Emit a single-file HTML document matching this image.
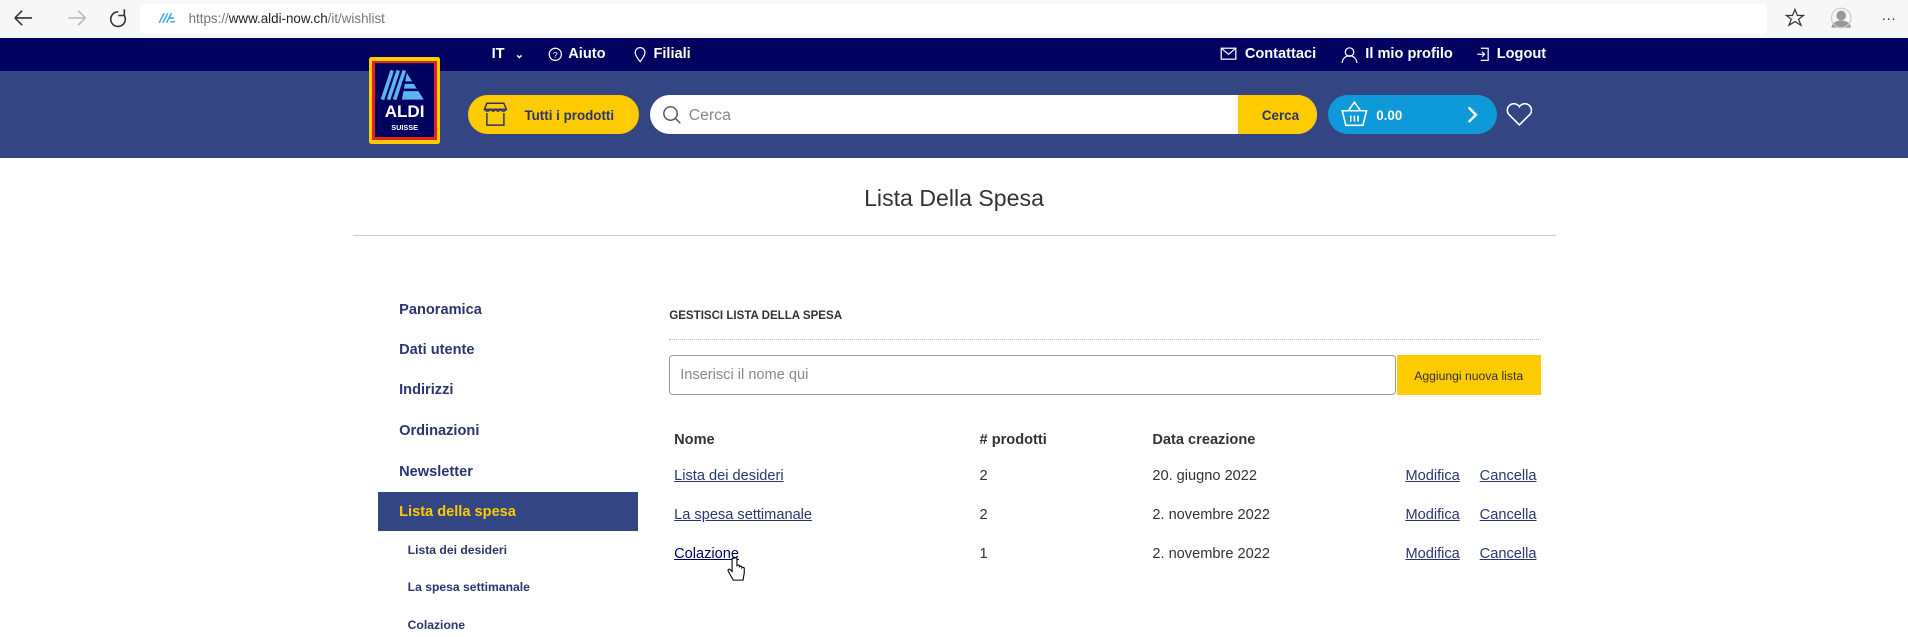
<!DOCTYPE html>
<html><head><meta charset="utf-8">
<style>
html,body{margin:0;padding:0;}
body{width:1568px;height:523px;zoom:1.21684;overflow:hidden;background:#fff;font-family:"Liberation Sans",sans-serif;position:relative;}
.a{position:absolute;white-space:nowrap;}
.nav{color:#fff;font-size:12px;font-weight:bold;}
.sb{color:#2b3570;font-size:12px;font-weight:bold;left:328px;}
.sub{color:#2b3570;font-size:10px;font-weight:bold;left:335px;}
.th{color:#333;font-size:12px;font-weight:bold;}
.td{color:#333;font-size:12px;}
.lk{color:#2b3570;font-size:12px;text-decoration:underline;}
</style></head><body>
<div class="a" style="left:0;top:0;width:1568px;height:31px;background:#f7f7f7;border-bottom:1px solid #ddd;"></div>
<div class="a" style="left:115px;top:3px;width:1337px;height:25px;background:#fff;border-radius:4px;"></div>
<svg class="a" style="left:8px;top:6px" width="100" height="18" viewBox="0 0 100 18" fill="none" stroke-width="1.3">
<path d="M4 9h14M4 9l6-6M4 9l6 6" stroke="#333"/>
<path d="M48 9h14M62 9l-6-6M62 9l-6 6" stroke="#bbb"/>
<path d="M89 4a6 6 0 1 0 5 3M94 2v5h-5" stroke="#333"/>
</svg>
<svg class="a" style="left:130px;top:10px" width="14" height="10"><path d="M1 9l4-8M4 9l4-8M7 9l4-8M9 5h4M10 8h4" stroke="#4aa8e0" stroke-width="1.3"/></svg>
<div class="a" style="left:155px;top:9px;font-size:11px;color:#777">https://<span style="color:#222">www.aldi-now.ch</span>/it/wishlist</div>
<svg class="a" style="left:1466px;top:6px" width="100" height="18" fill="none" stroke="#333"><path d="M9 2l2 5h5l-4 3 2 5-5-3-5 3 2-5-4-3h5z"/><circle cx="47" cy="7" r="4" fill="#999" stroke="none"/><path d="M39 17a8 6 0 0 1 16 0" fill="#999" stroke="none"/><circle cx="47" cy="9" r="8" stroke="#ccc"/><text x="80" y="13" font-size="12" fill="#333" stroke="none">···</text></svg>
<div class="a" style="left:0;top:31px;width:1568px;height:27px;background:#00005f;"></div>
<div class="a" style="left:0;top:58px;width:1568px;height:72px;background:#334582;"></div>
<div class="a nav" style="left:404px;top:38px;">IT <span style="font-size:9px;margin-left:5px">&#8964;</span></div>
<svg class="a" style="left:450px;top:39px" width="12" height="12" fill="none" stroke="#fff"><circle cx="6" cy="6" r="5"/><text x="4" y="9" font-size="7" fill="#fff" stroke="none">?</text></svg>
<div class="a nav" style="left:467px;top:38px;">Aiuto</div>
<svg class="a" style="left:521px;top:39px" width="10" height="13" fill="none" stroke="#fff"><path d="M5 12C1 7 1 5 1 4.5a4 4 0 0 1 8 0C9 5 9 7 5 12z"/></svg>
<div class="a nav" style="left:537px;top:38px;">Filiali</div>
<svg class="a" style="left:1003px;top:39px" width="14" height="11" fill="none" stroke="#fff"><rect x="1" y="1" width="12" height="9"/><path d="M1 1l6 5 6-5"/></svg>
<div class="a nav" style="left:1023px;top:38px;">Contattaci</div>
<svg class="a" style="left:1102px;top:38px" width="14" height="14" fill="none" stroke="#fff"><circle cx="7" cy="5" r="3.5"/><path d="M1 14a6 6 0 0 1 12 0"/></svg>
<div class="a nav" style="left:1122px;top:38px;">Il mio profilo</div>
<svg class="a" style="left:1213px;top:39px" width="12" height="12" fill="none" stroke="#fff"><path d="M4 1h6v10H4M1 6h6M5 4l2 2-2 2"/></svg>
<div class="a nav" style="left:1230px;top:38px;">Logout</div>
<div class="a" style="left:303px;top:47px;width:59px;height:71px;background:#fc0;border-radius:2px;"></div>
<div class="a" style="left:306px;top:50px;width:53px;height:65px;background:#e5231b;"></div>
<div class="a" style="left:308px;top:52px;width:49px;height:61px;background:#00005f;"></div>
<svg class="a" style="left:312px;top:56px" width="40" height="28"><path d="M2 26L10 2M7 26L15 2M12 26L20 2" stroke="#5ab4ee" stroke-width="3"/><path d="M22 4L36 26H18z" fill="#5ab4ee"/><path d="M18 12h20M18 18h20" stroke="#00005f" stroke-width="2"/></svg>
<div class="a" style="left:310px;top:84px;width:45px;text-align:center;color:#fff;font-weight:bold;font-size:14px;">ALDI</div>
<div class="a" style="left:310px;top:101px;width:45px;text-align:center;color:#fff;font-weight:bold;font-size:6px;">SUISSE</div>
<div class="a" style="left:385px;top:78px;width:140px;height:32px;background:#fecb00;border-radius:16px;"></div>
<svg class="a" style="left:396px;top:84px" width="22" height="20" fill="none" stroke="#2b3570" stroke-width="1.2"><path d="M2 6l2-5h14l2 5zM2 6q2.5 3 5 0q2.5 3 4 0q2.5 3 4 0q2.5 3 5 0M4 9v10h14V9"/></svg>
<div class="a" style="left:431px;top:89px;font-size:11px;font-weight:bold;color:#2b3570;">Tutti i prodotti</div>
<div class="a" style="left:534px;top:78px;width:548px;height:32px;background:#fff;border-radius:16px;"></div>
<div class="a" style="left:1017px;top:78px;width:65px;height:32px;background:#fecb00;border-radius:0 16px 16px 0;"></div>
<svg class="a" style="left:544px;top:86px" width="16" height="16" fill="none" stroke="#555" stroke-width="1.2"><circle cx="7" cy="7" r="5.5"/><path d="M11 11l4 4"/></svg>
<div class="a" style="left:566px;top:88px;font-size:13px;color:#888;">Cerca</div>
<div class="a" style="left:1037px;top:89px;font-size:11px;font-weight:bold;color:#2b3570;">Cerca</div>
<div class="a" style="left:1091px;top:78px;width:139px;height:32px;background:#0e9ad9;border-radius:16px;"></div>
<svg class="a" style="left:1102px;top:83px" width="22" height="22" fill="none" stroke="#fff" stroke-width="1.3"><path d="M1 8h20l-3 12H4zM6 8l5-7 5 7M8 12v5M11 12v5M14 12v5"/></svg>
<div class="a" style="left:1131px;top:89px;font-size:11px;font-weight:bold;color:#fff;">0.00</div>
<svg class="a" style="left:1204px;top:86px" width="12" height="16" fill="none" stroke="#fff" stroke-width="2"><path d="M3 2l6 6-6 6"/></svg>
<svg class="a" style="left:1238px;top:85px" width="22" height="19" fill="none" stroke="#fff" stroke-width="1.3"><path d="M11 18L2 9a5 5 0 0 1 9-6a5 5 0 0 1 9 6z"/></svg>
<div class="a" style="left:0;width:1568px;text-align:center;top:152px;font-size:19px;color:#333;">Lista Della Spesa</div>
<div class="a" style="left:290px;top:193px;width:989px;height:1px;background:#ccc;"></div>
<div class="a sb" style="top:248px">Panoramica</div>
<div class="a sb" style="top:281px">Dati utente</div>
<div class="a sb" style="top:314px">Indirizzi</div>
<div class="a sb" style="top:348px">Ordinazioni</div>
<div class="a sb" style="top:381px">Newsletter</div>
<div class="a" style="left:311px;top:404px;width:213px;height:32px;background:#334582;"></div>
<div class="a sb" style="top:414px;color:#fecb00">Lista della spesa</div>
<div class="a sub" style="top:446px">Lista dei desideri</div>
<div class="a sub" style="top:477px">La spesa settimanale</div>
<div class="a sub" style="top:508px">Colazione</div>
<div class="a" style="left:550px;top:255px;font-size:9.5px;font-weight:bold;color:#333;">GESTISCI LISTA DELLA SPESA</div>
<div class="a" style="left:550px;top:279px;width:716px;border-top:1px dotted #bbb;"></div>
<div class="a" style="left:550px;top:292px;width:596px;height:31px;border:1px solid #999;border-radius:3px;"></div>
<div class="a" style="left:559px;top:302px;font-size:12px;color:#888;">Inserisci il nome qui</div>
<div class="a" style="left:1148px;top:292px;width:118px;height:33px;background:#fecb00;"></div>
<div class="a" style="left:1148px;top:303px;width:118px;text-align:center;font-size:10px;color:#333;">Aggiungi nuova lista</div>
<div class="a th" style="left:554px;top:355px">Nome</div>
<div class="a th" style="left:805px;top:355px"># prodotti</div>
<div class="a th" style="left:947px;top:355px">Data creazione</div>
<div class="a lk" style="left:554px;top:385px">Lista dei desideri</div>
<div class="a td" style="left:805px;top:385px">2</div>
<div class="a td" style="left:947px;top:385px">20. giugno 2022</div>
<div class="a lk" style="left:1155px;top:385px">Modifica</div>
<div class="a lk" style="left:1216px;top:385px">Cancella</div>
<div class="a lk" style="left:554px;top:417px">La spesa settimanale</div>
<div class="a td" style="left:805px;top:417px">2</div>
<div class="a td" style="left:947px;top:417px">2. novembre 2022</div>
<div class="a lk" style="left:1155px;top:417px">Modifica</div>
<div class="a lk" style="left:1216px;top:417px">Cancella</div>
<div class="a lk" style="left:554px;top:449px;color:#00005f">Colazione</div>
<div class="a td" style="left:805px;top:449px">1</div>
<div class="a td" style="left:947px;top:449px">2. novembre 2022</div>
<div class="a lk" style="left:1155px;top:449px">Modifica</div>
<div class="a lk" style="left:1216px;top:449px">Cancella</div>
<svg class="a" style="left:597px;top:458px" width="16" height="22"><path d="M5 1v11l-2-2q-2 0-1 2l4 7h8l1-6v-4q-1-1-2 0v-1q-1-1-2 0v-1q-1-1-2 0V1q-1-1-2 0z" fill="#fff" stroke="#000" stroke-width="0.9"/></svg>
</body></html>
